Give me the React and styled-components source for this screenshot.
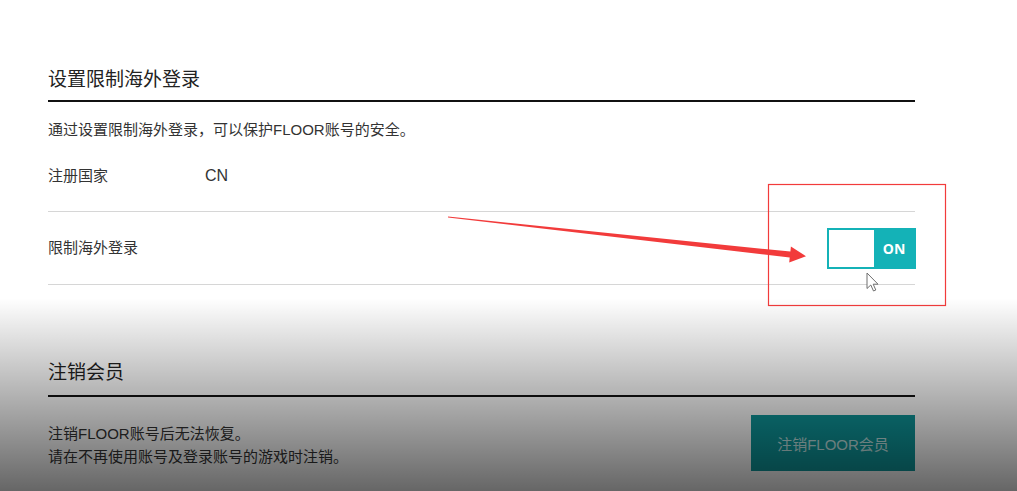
import styled, { createGlobalStyle } from "styled-components";

const GlobalStyle = createGlobalStyle`
  html, body {
    margin: 0;
    padding: 0;
    background: #fff;
  }
  body {
    font-family: "Liberation Sans", "Noto Sans CJK SC", sans-serif;
    color: #333;
  }
`;

export default function App() {
  return (
    <>
      <GlobalStyle />
      <Page>
        <Content>
          <Section>
            <SectionTitle>设置限制海外登录</SectionTitle>
            <Description>通过设置限制海外登录，可以保护FLOOR账号的安全。</Description>
            <InfoRow>
              <InfoLabel>注册国家</InfoLabel>
              <InfoValue>CN</InfoValue>
            </InfoRow>
            <SettingRow>
              <SettingLabel>限制海外登录</SettingLabel>
              <Toggle type="button" aria-pressed="true">
                <ToggleKnob />
                <ToggleState>ON</ToggleState>
              </Toggle>
            </SettingRow>
          </Section>

          <Section $gap={74}>
            <SectionTitle $pad={8}>注销会员</SectionTitle>
            <WithdrawRow>
              <WithdrawText>
                <p>注销FLOOR账号后无法恢复。</p>
                <p>请在不再使用账号及登录账号的游戏时注销。</p>
              </WithdrawText>
              <WithdrawButton type="button">注销FLOOR会员</WithdrawButton>
            </WithdrawRow>
          </Section>
        </Content>

        <Annotations viewBox="0 0 1017 491" aria-hidden="true">
          <rect x="768.5" y="184.5" width="177" height="121" fill="none" stroke="#f23b3b" strokeWidth="1.2" />
          <polygon
            points="448,216.6 790.4,251.6 790.9,246.6 806,256.2 789.2,262.6 789.7,257.4 448,217.6"
            fill="#f23b3b"
          />
          <path
            d="M867 273 V288.5 L870.8 285 L873.5 291 L875.8 290 L873.2 284.2 L878 284.2 Z"
            fill="#fff"
            stroke="#6f6f6f"
            strokeWidth="1"
            strokeLinejoin="round"
          />
        </Annotations>
        <Shade />
      </Page>
    </>
  );
}

const Page = styled.div`
  position: relative;
  width: 1017px;
  height: 491px;
  overflow: hidden;
  background: #fff;
`;

const Content = styled.main`
  width: 867px;
  padding: 66px 0 0 48px;
`;

const Section = styled.section`
  margin-top: ${(p) => p.$gap || 0}px;
`;

const SectionTitle = styled.h2`
  margin: 0;
  padding-bottom: ${(p) => p.$pad || 6}px;
  border-bottom: 2px solid #111;
  font-size: 19px;
  font-weight: 400;
  line-height: 28px;
  color: #222;
`;

const Description = styled.p`
  margin: 17px 0 0;
  font-size: 15px;
  line-height: 22px;
  color: #333;
`;

const InfoRow = styled.div`
  display: flex;
  margin-top: 24px;
  font-size: 15px;
  line-height: 22px;
`;

const InfoLabel = styled.span`
  width: 157px;
  color: #333;
`;

const InfoValue = styled.span`
  font-size: 16px;
  color: #333;
`;

const SettingRow = styled.div`
  display: flex;
  align-items: center;
  justify-content: space-between;
  height: 72px;
  margin-top: 24px;
  border-top: 1px solid #d6d6d6;
  border-bottom: 1px solid #d6d6d6;
`;

const SettingLabel = styled.span`
  font-size: 15px;
  line-height: 22px;
  color: #333;
`;

const Toggle = styled.button`
  display: flex;
  width: 89px;
  height: 41px;
  padding: 0;
  margin: 0 -1px 0 0;
  border: 2px solid #14b2b7;
  background: #14b2b7;
  cursor: pointer;
`;

const ToggleKnob = styled.span`
  width: 45px;
  height: 100%;
  background: #fff;
`;

const ToggleState = styled.span`
  flex: 1;
  display: flex;
  align-items: center;
  justify-content: center;
  font-family: "Open Sans", "Liberation Sans", sans-serif;
  font-size: 14px;
  font-weight: 700;
  color: #fff;
`;

const WithdrawRow = styled.div`
  display: flex;
  align-items: center;
  justify-content: space-between;
  margin-top: 18px;
`;

const WithdrawText = styled.div`
  padding-top: 3px;

  p {
    margin: 0;
    font-size: 15px;
    line-height: 23px;
    color: #333;
  }
`;

const WithdrawButton = styled.button`
  width: 164px;
  height: 56px;
  border: none;
  background: #0e979b;
  color: #c4e6e6;
  font-family: "Liberation Sans", "Noto Sans CJK SC", sans-serif;
  font-size: 15px;
  cursor: pointer;
`;

const Annotations = styled.svg`
  position: absolute;
  inset: 0;
  width: 1017px;
  height: 491px;
  pointer-events: none;
`;

const Shade = styled.div`
  position: absolute;
  inset: 0;
  pointer-events: none;
  background: linear-gradient(
    180deg,
    rgba(0, 0, 0, 0) 0px,
    rgba(0, 0, 0, 0) 298px,
    rgba(0, 0, 0, 0.16) 350px,
    rgba(0, 0, 0, 0.6) 491px
  );
`;
